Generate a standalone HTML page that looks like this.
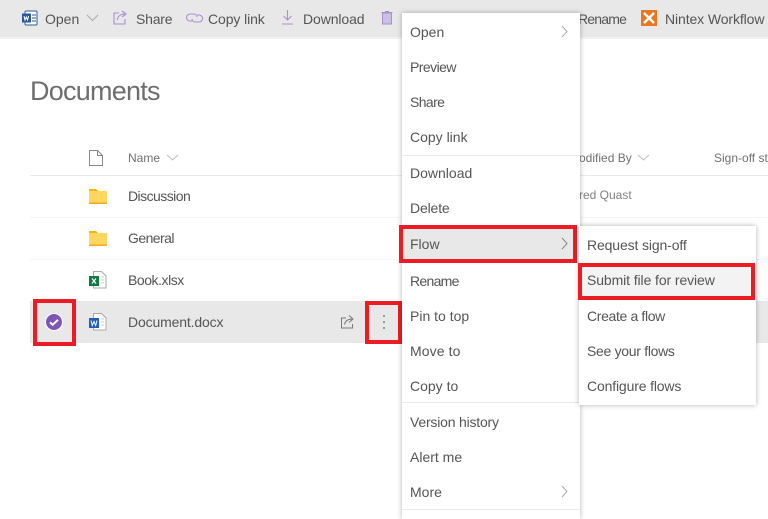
<!DOCTYPE html>
<html><head><meta charset="utf-8"><style>
html,body{margin:0;padding:0;background:#fff}
#p{position:relative;width:768px;height:519px;overflow:hidden;background:#fff;font-family:"Liberation Sans",sans-serif;color:#555;font-size:14px}
.t{position:absolute;white-space:nowrap;line-height:20px}
.a{position:absolute}
svg{position:absolute;overflow:visible}
.red{position:absolute;border:4px solid #ed1c24;box-sizing:border-box}
</style></head><body><div id="p">
<div class="a" style="left:0;top:0;width:768px;height:37px;background:#e8e8e8"></div>
<div class="a" style="left:0;top:37px;width:768px;height:2px;background:#f1f1f1"></div>

<!-- toolbar -->
<svg style="left:22px;top:10px" width="16" height="16" viewBox="0 0 16 16"><rect x="3" y="1" width="12" height="14" rx="1" fill="#fff" stroke="#2b579a"/><rect x="0" y="3.5" width="9" height="9" fill="#2b579a"/><path d="M2 6l1 4 1.300-3 1.300 3 1-4" stroke="#fff" fill="none"/><path d="M10 5h4M10 8h4M10 11h4" stroke="#2b579a"/></svg>
<div class="t" style="left:45px;top:9px">Open</div>
<svg style="left:86px;top:14px" width="13" height="7"><path d="M1 1l5.500 5.500L12 1" fill="none" stroke="#aaa"/></svg>
<svg style="left:113px;top:10px" width="16" height="15" viewBox="0 0 16 15"><path d="M6 3H1v11h11V9M4 10c1-4 4-6 8-6M9 1l4 3-4 3" fill="none" stroke="#a88fcf" stroke-width="1.100"/></svg>
<div class="t" style="left:136px;top:9px;letter-spacing:-.2px">Share</div>
<svg style="left:186px;top:12px" width="17" height="12" viewBox="0 0 17 12"><path d="M6 9H4a3.300 3.300 0 0 1 0-7h4a3.300 3.300 0 0 1 3 3M11 3h2a3.300 3.300 0 0 1 0 7H9a3.300 3.300 0 0 1-3-3" fill="none" stroke="#a88fcf" stroke-width="1.100"/></svg>
<div class="t" style="left:208px;top:9px;letter-spacing:-.1px">Copy link</div>
<svg style="left:282px;top:10px" width="11" height="15" viewBox="0 0 11 15"><path d="M5.500 0v10M1.500 6l4 4 4-4M0 14h11" fill="none" stroke="#a88fcf" stroke-width="1.100"/></svg>
<div class="t" style="left:303px;top:9px;letter-spacing:-.1px">Download</div>
<svg style="left:381px;top:10px" width="12" height="15" viewBox="0 0 12 15"><path d="M4 1.500h4M0.500 2.500h11" stroke="#a88fcf" fill="none"/><rect x="1.500" y="3" width="9" height="11" fill="#cdbfe4" stroke="#a88fcf"/></svg>
<div class="t" style="left:578px;top:9px;letter-spacing:-.8px">Rename</div>
<svg style="left:641px;top:10px" width="16" height="16" viewBox="0 0 16 16"><rect width="16" height="16" fill="#e87722"/><path d="M3 3l10 10M13 3L3 13" stroke="#fff" stroke-width="2.400"/></svg>
<div class="t" style="left:665px;top:9px;letter-spacing:-.1px">Nintex Workflow</div>

<!-- title -->
<div class="t" style="left:30px;top:74px;font-size:27px;line-height:34px;color:#6e6e6e;letter-spacing:-.75px">Documents</div>

<!-- header -->
<svg style="left:89px;top:150px" width="14" height="16" viewBox="0 0 14 16"><path d="M.5.500h8l5 5v10H.5zM8.500.500v5h5" fill="#fff" stroke="#888"/></svg>
<div class="t" style="left:128px;top:148px;font-size:12px;color:#707070">Name</div>
<svg style="left:166px;top:154px" width="13" height="7"><path d="M1 1l5.500 5L12 1" fill="none" stroke="#bbb"/></svg>
<div class="t" style="left:579px;top:148px;font-size:12px;color:#707070">odified By</div>
<svg style="left:637px;top:154px" width="13" height="7"><path d="M1 1l5.500 5L12 1" fill="none" stroke="#bbb"/></svg>
<div class="t" style="left:714px;top:148px;font-size:12px;color:#707070">Sign-off st</div>
<div class="a" style="left:30px;top:175px;width:738px;height:1px;background:#eaeaea"></div>
<div class="a" style="left:30px;top:217px;width:738px;height:1px;background:#f4f4f4"></div>
<div class="a" style="left:30px;top:259px;width:738px;height:1px;background:#f4f4f4"></div>
<div class="a" style="left:30px;top:301px;width:738px;height:42px;background:#e8e8e8"></div>

<!-- rows -->
<svg style="left:89px;top:188px" width="18" height="16" viewBox="0 0 18 16"><path d="M0 1h7l2 2h9v12H0z" fill="#ffd75e"/><path d="M0 1h7l2 2H0z" fill="#f7b500"/><rect y="14.500" width="18" height="1.500" fill="#f7a823"/></svg>
<div class="t" style="left:128px;top:186px;letter-spacing:-.55px">Discussion</div>
<div class="t" style="left:579px;top:185px;font-size:12px;color:#808080">red Quast</div>
<svg style="left:89px;top:230px" width="18" height="16" viewBox="0 0 18 16"><path d="M0 1h7l2 2h9v12H0z" fill="#ffd75e"/><path d="M0 1h7l2 2H0z" fill="#f7b500"/><rect y="14.500" width="18" height="1.500" fill="#f7a823"/></svg>
<div class="t" style="left:128px;top:228px;letter-spacing:-.55px">General</div>
<svg style="left:89px;top:271px" width="18" height="18" viewBox="0 0 18 18"><path d="M4.500.500h8l4.500 4.500v12H4.500z" fill="#fff" stroke="#aaa"/><path d="M12 6h3M12 9h3M12 12h3" stroke="#ccc"/><rect y="5" width="10" height="10" fill="#107c41"/><path d="M3 7.500l4 5M7 7.500l-4 5" stroke="#fff" stroke-width="1.200"/></svg>
<div class="t" style="left:128px;top:270px;letter-spacing:-.45px">Book.xlsx</div>
<svg style="left:89px;top:313px" width="18" height="18" viewBox="0 0 18 18"><path d="M4.500.500h8l4.500 4.500v12H4.500z" fill="#fff" stroke="#aaa"/><path d="M12 6h3M12 9h3M12 12h3" stroke="#ccc"/><rect y="5" width="10" height="10" fill="#1f5fbf"/><path d="M2 7.500l1.300 5L5 8.500l1.700 4 1.300-5" stroke="#fff" fill="none"/></svg>
<div class="t" style="left:128px;top:312px;letter-spacing:-.15px">Document.docx</div>
<svg style="left:341px;top:315px" width="15" height="14" viewBox="0 0 15 14"><path d="M5 3H.5v10h11V9M3.500 9.500c1-4 4-5.500 7.500-5.500M8 .500L12 4 8 7.500" fill="none" stroke="#777"/></svg>

<!-- check -->
<svg style="left:45px;top:313px" width="18" height="18" viewBox="0 0 18 18"><circle cx="9" cy="9" r="8.500" fill="#7e57b5" stroke="#fff"/><path d="M5 9.300l2.700 2.500L13 6.800" stroke="#fff" stroke-width="2" fill="none"/></svg>
<div class="red" style="left:33px;top:299px;width:43px;height:47px"></div>
<!-- dots -->
<div class="a" style="left:383px;top:315px;width:2px;height:2px;background:#999"></div>
<div class="a" style="left:383px;top:321px;width:2px;height:2px;background:#999"></div>
<div class="a" style="left:383px;top:327px;width:2px;height:2px;background:#999"></div>
<div class="red" style="left:365px;top:301px;width:37px;height:43px"></div>

<!-- main menu -->
<div class="a" style="left:402px;top:13px;width:178px;height:506px;background:#fff;box-shadow:0 0 5px rgba(0,0,0,.3)"></div>
<div class="a" style="left:402px;top:155px;width:178px;height:1px;background:#eaeaea"></div>
<div class="a" style="left:402px;top:402px;width:178px;height:1px;background:#eaeaea"></div>
<div class="a" style="left:402px;top:509px;width:178px;height:1px;background:#eaeaea"></div>
<div class="a" style="left:402px;top:226px;width:174px;height:35px;background:#e8e8e8"></div>
<div class="t" style="left:410px;top:22px">Open</div>
<div class="t" style="left:410px;top:57px;letter-spacing:-.55px">Preview</div>
<div class="t" style="left:410px;top:92px;letter-spacing:-.6px">Share</div>
<div class="t" style="left:410px;top:127px">Copy link</div>
<div class="t" style="left:410px;top:163px">Download</div>
<div class="t" style="left:410px;top:198px;letter-spacing:-.15px">Delete</div>
<div class="t" style="left:410px;top:234px">Flow</div>
<div class="t" style="left:410px;top:271px;letter-spacing:-.7px">Rename</div>
<div class="t" style="left:410px;top:306px">Pin to top</div>
<div class="t" style="left:410px;top:341px;letter-spacing:.1px">Move to</div>
<div class="t" style="left:410px;top:376px">Copy to</div>
<div class="t" style="left:410px;top:412px;letter-spacing:-.2px">Version history</div>
<div class="t" style="left:410px;top:447px">Alert me</div>
<div class="t" style="left:410px;top:482px">More</div>
<svg style="left:561px;top:25px" width="7" height="13"><path d="M1 1l5 5.500L1 12" fill="none" stroke="#aaa"/></svg>
<svg style="left:561px;top:237px" width="7" height="13"><path d="M1 1l5 5.500L1 12" fill="none" stroke="#888"/></svg>
<svg style="left:561px;top:485px" width="7" height="13"><path d="M1 1l5 5.500L1 12" fill="none" stroke="#aaa"/></svg>
<div class="red" style="left:399px;top:225px;width:178px;height:38px"></div>

<!-- submenu -->
<div class="a" style="left:579px;top:226px;width:177px;height:179px;background:#fff;box-shadow:0 0 5px rgba(0,0,0,.3)"></div>
<div class="a" style="left:581px;top:266px;width:170px;height:31px;background:#f3f3f3"></div>
<div class="t" style="left:587px;top:235px;letter-spacing:-.13px">Request sign-off</div>
<div class="t" style="left:587px;top:270px;letter-spacing:-.1px">Submit file for review</div>
<div class="t" style="left:587px;top:306px;letter-spacing:-.35px">Create a flow</div>
<div class="t" style="left:587px;top:341px;letter-spacing:-.3px">See your flows</div>
<div class="t" style="left:587px;top:376px;letter-spacing:-.15px">Configure flows</div>
<div class="red" style="left:578px;top:263px;width:177px;height:37px"></div>
</div></body></html>
